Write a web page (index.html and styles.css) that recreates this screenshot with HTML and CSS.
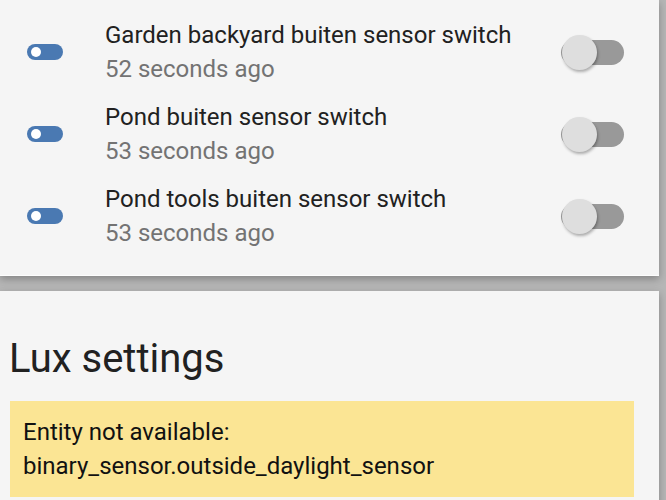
FILE: index.html
```html
<!DOCTYPE html>
<html>
<head>
<meta charset="utf-8">
<link rel="stylesheet" href="styles.css">
</head>
<body>
<div class="page">
  <section class="card entities">
    <div class="row">
      <svg class="state-icon" viewBox="0 0 36 16" width="36" height="16"><rect x="0" y="0" width="36" height="16" rx="8" fill="#4a79b2"/><circle cx="9" cy="8" r="5" fill="#ffffff"/></svg>
      <div class="info">
        <div class="name">Garden backyard buiten sensor switch</div>
        <div class="secondary">52 seconds ago</div>
      </div>
      <div class="toggle"><div class="track"></div><div class="thumb"></div></div>
    </div>
    <div class="row">
      <svg class="state-icon" viewBox="0 0 36 16" width="36" height="16"><rect x="0" y="0" width="36" height="16" rx="8" fill="#4a79b2"/><circle cx="9" cy="8" r="5" fill="#ffffff"/></svg>
      <div class="info">
        <div class="name">Pond buiten sensor switch</div>
        <div class="secondary">53 seconds ago</div>
      </div>
      <div class="toggle"><div class="track"></div><div class="thumb"></div></div>
    </div>
    <div class="row">
      <svg class="state-icon" viewBox="0 0 36 16" width="36" height="16"><rect x="0" y="0" width="36" height="16" rx="8" fill="#4a79b2"/><circle cx="9" cy="8" r="5" fill="#ffffff"/></svg>
      <div class="info">
        <div class="name">Pond tools buiten sensor switch</div>
        <div class="secondary">53 seconds ago</div>
      </div>
      <div class="toggle"><div class="track"></div><div class="thumb"></div></div>
    </div>
  </section>
  <section class="card lux">
    <h1 class="card-title">Lux settings</h1>
    <div class="warning">
      <div>Entity not available:</div>
      <div>binary_sensor.outside_daylight_sensor</div>
    </div>
  </section>
</div>
</body>
</html>
```
FILE: styles.css
```css
* { box-sizing: border-box; }
html, body { margin: 0; padding: 0; }
body {
  background: #b6b6b6;
  font-family: Roboto, "Liberation Sans", sans-serif;
  color: #212121;
  overflow: hidden;
  height: 500px;
}
.page {
  width: 659px;
  display: flex;
  flex-direction: column;
  gap: 15px;
}
.card {
  background: #f5f5f5;
  box-shadow: 0 3px 8px rgba(0,0,0,0.28);
}
.entities {
  height: 276px;
  padding-top: 11px;
  border-bottom: 1px solid #fdfdfd;
}
.row {
  height: 82px;
  display: flex;
  align-items: center;
  padding-left: 27px;
  padding-right: 35px;
}
.state-icon { flex: none; display: block; }
.info {
  flex: 1;
  margin-left: 42px;
}
.name {
  font-size: 24px;
  line-height: 34px;
  color: #212121;
  white-space: nowrap;
}
.secondary {
  font-size: 24px;
  line-height: 34px;
  color: #737373;
}
.toggle {
  position: relative;
  flex: none;
  width: 63px;
  height: 35px;
  display: flex;
  align-items: center;
}
.track {
  width: 63px;
  height: 25px;
  border-radius: 12.5px;
  background: #999999;
}
.thumb {
  position: absolute;
  left: 1px;
  top: 0;
  width: 35px;
  height: 35px;
  border-radius: 50%;
  background: #dedede;
  box-shadow: 1px 2px 3px rgba(0,0,0,0.3);
}
.lux {
  height: 240px;
  padding: 0 25px 0 10px;
}
.card-title {
  margin: 0;
  font-weight: 400;
  font-size: 40px;
  line-height: 48px;
  padding-top: 44px;
  padding-bottom: 18px;
  margin-left: -1px;
  color: #212121;
}
.warning {
  background: #fbe594;
  padding: 14px 12px 14px 13px;
  font-size: 24px;
  line-height: 34px;
  color: #111;
}
```
